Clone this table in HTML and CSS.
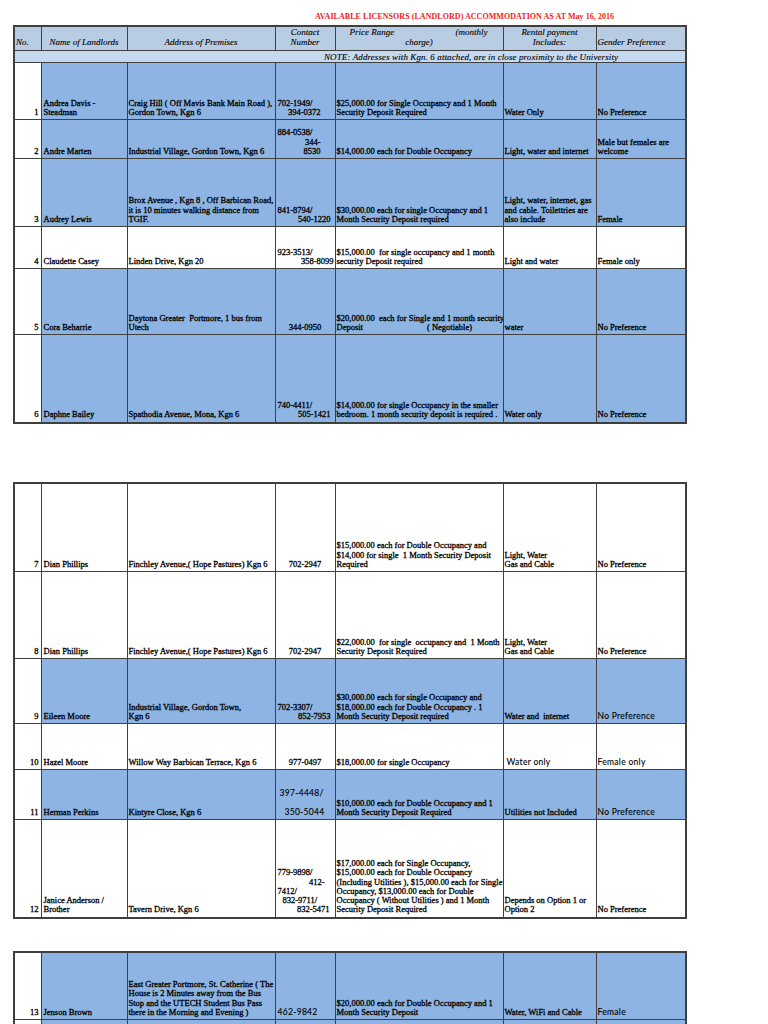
FILE: index.html
```html
<!DOCTYPE html>
<html lang="en">
<head>
<meta charset="utf-8">
<title>Available Licensors (Landlord) Accommodation</title>
<link rel="stylesheet" href="styles.css">
</head>
<body>
<div class="title">AVAILABLE LICENSORS (LANDLORD) ACCOMMODATION AS AT May 16, 2016</div>

<table class="sheet">
  <colgroup>
    <col class="c-no"><col class="c-nm"><col class="c-ad"><col class="c-ct"><col class="c-pr"><col class="c-rp"><col class="c-gp">
  </colgroup>
  <thead>
    <tr class="hdr">
      <th class="no-h">No.</th>
      <th>Name of Landlords</th>
      <th>Address of Premises</th>
      <th>Contact<br>Number</th>
      <th><div class="prl"><span>Price Range</span><span>(monthly</span></div><div>charge)</div></th>
      <th>Rental payment<br>Includes:</th>
      <th class="gp-h">Gender Preference</th>
    </tr>
    <tr class="note">
      <td colspan="7">NOTE: Addresses with Kgn. 6 attached, are in close proximity to the University</td>
    </tr>
  </thead>
  <tbody>
    <tr class="b h57">
      <td class="no">1</td>
      <td class="nm">Andrea Davis -<br>Steadman</td>
      <td class="ad">Craig Hill ( Off Mavis Bank Main Road ),<br>Gordon Town, Kgn 6</td>
      <td class="ct"><div class="cl">702-1949/</div><div class="cr p14">394-0372</div></td>
      <td class="pr">$25,000.00 for Single Occupancy and 1 Month<br>Security Deposit Required</td>
      <td class="rp">Water Only</td>
      <td class="gp">No Preference</td>
    </tr>
    <tr class="b h39">
      <td class="no">2</td>
      <td class="nm">Andre Marten</td>
      <td class="ad">Industrial Village, Gordon Town, Kgn 6</td>
      <td class="ct"><div class="cl">884-0538/</div><div class="cr p14">344-</div><div class="cr p14">8530</div></td>
      <td class="pr">$14,000.00 each for Double Occupancy</td>
      <td class="rp">Light, water and internet</td>
      <td class="gp">Male but females are<br>welcome</td>
    </tr>
    <tr class="b h68">
      <td class="no">3</td>
      <td class="nm">Audrey Lewis</td>
      <td class="ad">Brox Avenue , Kgn 8 , Off Barbican Road,<br>it is 10 minutes walking distance from<br>TGIF.</td>
      <td class="ct"><div class="cl">841-8794/</div><div class="cr p4">540-1220</div></td>
      <td class="pr">$30,000.00 each for single Occupancy and 1<br>Month Security Deposit required</td>
      <td class="rp">Light, water, internet, gas<br>and cable. Toilettries are<br>also include</td>
      <td class="gp">Female</td>
    </tr>
    <tr class="w h42">
      <td class="no">4</td>
      <td class="nm">Claudette Casey</td>
      <td class="ad">Linden Drive, Kgn 20</td>
      <td class="ct"><div class="cl">923-3513/</div><div class="cr p1">358-8099</div></td>
      <td class="pr">$15,000.00&nbsp; for single occupancy and 1 month<br>security Deposit required</td>
      <td class="rp">Light and water</td>
      <td class="gp">Female only</td>
    </tr>
    <tr class="b h66">
      <td class="no">5</td>
      <td class="nm">Cora Beharrie</td>
      <td class="ad">Daytona Greater&nbsp; Portmore, 1 bus from<br>Utech</td>
      <td class="ct"><div class="cc">344-0950</div></td>
      <td class="pr">$20,000.00&nbsp; each for Single and 1 month security<br>Deposit<span class="neg">( Negotiable)</span></td>
      <td class="rp">water</td>
      <td class="gp">No Preference</td>
    </tr>
    <tr class="b h88">
      <td class="no">6</td>
      <td class="nm">Daphne Bailey</td>
      <td class="ad">Spathodia Avenue, Mona, Kgn 6</td>
      <td class="ct"><div class="cl">740-4411/</div><div class="cr p4">505-1421</div></td>
      <td class="pr">$14,000.00 for single Occupancy in the smaller<br>bedroom. 1 month security deposit is required .</td>
      <td class="rp">Water only</td>
      <td class="gp">No Preference</td>
    </tr>
  </tbody>
</table>

<table class="sheet t2">
  <colgroup>
    <col class="c-no"><col class="c-nm"><col class="c-ad"><col class="c-ct"><col class="c-pr"><col class="c-rp"><col class="c-gp">
  </colgroup>
  <tbody>
    <tr class="w h89">
      <td class="no">7</td>
      <td class="nm">Dian Phillips</td>
      <td class="ad">Finchley Avenue,( Hope Pastures) Kgn 6</td>
      <td class="ct"><div class="cc">702-2947</div></td>
      <td class="pr">$15,000.00 each for Double Occupancy and<br>$14,000 for single&nbsp; 1 Month Security Deposit<br>Required</td>
      <td class="rp">Light, Water<br>Gas and Cable</td>
      <td class="gp">No Preference</td>
    </tr>
    <tr class="w h87 lt">
      <td class="no">8</td>
      <td class="nm">Dian Phillips</td>
      <td class="ad">Finchley Avenue,( Hope Pastures) Kgn 6</td>
      <td class="ct"><div class="cc">702-2947</div></td>
      <td class="pr">$22,000.00&nbsp; for single&nbsp; occupancy and&nbsp; 1 Month<br>Security Deposit Required</td>
      <td class="rp">Light, Water<br>Gas and Cable</td>
      <td class="gp">No Preference</td>
    </tr>
    <tr class="b h65">
      <td class="no">9</td>
      <td class="nm">Eileen Moore</td>
      <td class="ad">Industrial Village, Gordon Town,<br>Kgn 6</td>
      <td class="ct"><div class="cl">702-3307/</div><div class="cr p4">852-7953</div></td>
      <td class="pr">$30,000.00 each for single Occupancy and<br>$18,000.00 each for Double Occupancy . 1<br>Month Security Deposit required</td>
      <td class="rp">Water and&nbsp; internet</td>
      <td class="gp ss">No Preference</td>
    </tr>
    <tr class="w h46">
      <td class="no">10</td>
      <td class="nm">Hazel Moore</td>
      <td class="ad">Willow Way Barbican Terrace, Kgn 6</td>
      <td class="ct"><div class="cc">977-0497</div></td>
      <td class="pr">$18,000.00 for single Occupancy</td>
      <td class="rp ss rp-ss">Water only</td>
      <td class="gp ss">Female only</td>
    </tr>
    <tr class="b h50">
      <td class="no">11</td>
      <td class="nm">Herman Perkins</td>
      <td class="ad">Kintyre Close, Kgn 6</td>
      <td class="ct ss"><div class="cl p3">397-4448/</div><div class="cl">&nbsp;</div><div class="cr p10">350-5044</div></td>
      <td class="pr">$10,000.00 each for Double Occupancy and 1<br>Month Security Deposit Required</td>
      <td class="rp">Utilities not Included</td>
      <td class="gp ss">No Preference</td>
    </tr>
    <tr class="w h98">
      <td class="no">12</td>
      <td class="nm">Janice Anderson /<br>Brother</td>
      <td class="ad">Tavern Drive, Kgn 6</td>
      <td class="ct"><div class="cl">779-9898/</div><div class="cr p10">412-</div><div class="cl">7412/</div><div class="cl p6">832-9711/</div><div class="cr p5">832-5471</div></td>
      <td class="pr">$17,000.00 each for Single Occupancy,<br>$15,000.00 each for Double Occupancy<br>(Including Utilities ), $15,000.00 each for Single<br>Occupancy, $13,000.00 each for Double<br>Occupancy ( Without Utilities ) and 1 Month<br>Security Deposit Required</td>
      <td class="rp">Depends on Option 1 or<br>Option 2</td>
      <td class="gp">No Preference</td>
    </tr>
  </tbody>
</table>

<table class="sheet t3">
  <colgroup>
    <col class="c-no"><col class="c-nm"><col class="c-ad"><col class="c-ct"><col class="c-pr"><col class="c-rp"><col class="c-gp">
  </colgroup>
  <tbody>
    <tr class="b h68">
      <td class="no">13</td>
      <td class="nm">Jenson Brown</td>
      <td class="ad">East Greater Portmore, St. Catherine ( The<br>House is 2 Minutes away from the Bus<br>Stop and the UTECH Student Bus Pass<br>there in the Morning and Evening )</td>
      <td class="ct ss"><div class="cl">462-9842</div></td>
      <td class="pr">$20,000.00 each for Double Occupancy and 1<br>Month Security Deposit</td>
      <td class="rp">Water, WiFi and Cable</td>
      <td class="gp ss">Female</td>
    </tr>
    <tr class="b h60">
      <td class="no"></td>
      <td class="nm"></td>
      <td class="ad"></td>
      <td class="ct"></td>
      <td class="pr"></td>
      <td class="rp"></td>
      <td class="gp"></td>
    </tr>
  </tbody>
</table>
</body>
</html>
```

FILE: styles.css
```css
html, body {
  margin: 0;
  padding: 0;
  background: #ffffff;
}

body {
  width: 768px;
  height: 1024px;
  overflow: hidden;
  font-family: "Liberation Serif", "Times New Roman", serif;
  color: #000000;
}

.title {
  height: 25px;
  box-sizing: border-box;
  padding: 12px 0 0 315px;
  font-size: 8px;
  line-height: 10px;
  font-weight: bold;
  letter-spacing: 0.05px;
  color: #ee1d23;
  white-space: nowrap;
}

.sheet {
  margin-left: 13px;
  width: 672px;
  table-layout: fixed;
  border-collapse: collapse;
  border: 2px solid #3f3f3f;
}

.t2 { margin-top: 58px; }
.t3 { margin-top: 32px; }

.c-no { width: 27px; }
.c-nm { width: 86px; }
.c-ad { width: 148px; }
.c-ct { width: 60px; }
.c-pr { width: 168px; }
.c-rp { width: 93px; }
.c-gp { width: 90px; }

.sheet th,
.sheet td {
  border: 1px solid #404040;
  padding: 0 1px 2px 1px;
  vertical-align: bottom;
  white-space: nowrap;
  overflow: hidden;
  font-size: 8.5px;
  line-height: 9.2px;
  font-weight: normal;
  text-align: left;
}

.sheet td {
  -webkit-text-stroke: 0.3px #000000;
}

/* header */
.hdr { height: 24px; }
.hdr th {
  background: #b8cce4;
  font-style: italic;
  font-size: 9px;
  line-height: 10px;
  text-align: center;
  padding-bottom: 3px;
  -webkit-text-stroke: 0.1px #000000;
}
.hdr th.no-h,
.hdr th.gp-h { text-align: left; }
.prl {
  display: flex;
  justify-content: space-between;
  padding: 0 14px 0 13px;
}

.note { height: 12px; }
.sheet .note td {
  background: #c5d9f1;
  font-style: italic;
  font-size: 9px;
  line-height: 10px;
  padding: 0 0 0 309px;
  vertical-align: middle;
  letter-spacing: 0.1px;
  -webkit-text-stroke: 0.1px #000000;
}

/* row fills */
.b td { background: #8db4e2; }
.b td.no { background: #ffffff; }
.w td { background: #ffffff; }
.lt td { border-top-color: #b4b4b4; }

/* row heights */
.h39 { height: 39px; }
.h42 { height: 42px; }
.h46 { height: 46px; }
.h50 { height: 50px; }
.h57 { height: 57px; }
.h60 { height: 60px; }
.h65 { height: 65px; }
.h66 { height: 66px; }
.h68 { height: 68px; }
.h87 { height: 87px; }
.h88 { height: 88px; }
.h89 { height: 89px; }
.h98 { height: 98px; }

/* columns */
.sheet td.no { text-align: right; padding-right: 2px; }
.sheet td.nm { padding-left: 2px; }

.cl { text-align: left; padding-left: 1px; }
.cr { text-align: right; }
.cc { text-align: center; }
.p1 { padding-right: 0; }
.p3 { padding-left: 3px; }
.p4 { padding-right: 3px; }
.p5 { padding-right: 4px; }
.p6 { padding-left: 6px; }
.p10 { padding-right: 9px; }
.p14 { padding-right: 13px; }

.neg { margin-left: 64px; }

.sheet .ss {
  font-family: Lato, "Open Sans", "Liberation Sans", sans-serif;
  font-size: 8.5px;
  letter-spacing: 0.3px;
  -webkit-text-stroke: 0.1px #000000;
}
.sheet .ct.ss { line-height: 9.5px; }
.sheet .rp-ss { padding-left: 3px; }
```
